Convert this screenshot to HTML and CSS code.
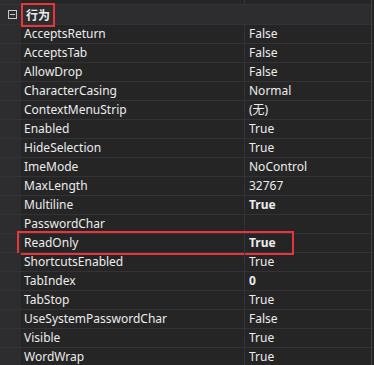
FILE: index.html
```html
<!DOCTYPE html>
<html lang="zh-CN">
<head>
    <meta charset="UTF-8">
    <title>属性</title>
    <link rel="stylesheet" href="styles.css">
</head>
<body>
    <div class="grid">
        <div class="row stub">
            <div class="gutter"></div>
            <div class="name"></div>
            <div class="value"></div>
        </div>

        <div class="row category">
            <div class="gutter"><span class="toggle"></span></div>
            <div class="cat-title"><span class="mark">行为</span></div>
        </div>

        <div class="row"><div class="gutter"></div><div class="name">AcceptsReturn</div><div class="value">False</div></div>
        <div class="row"><div class="gutter"></div><div class="name">AcceptsTab</div><div class="value">False</div></div>
        <div class="row"><div class="gutter"></div><div class="name">AllowDrop</div><div class="value">False</div></div>
        <div class="row"><div class="gutter"></div><div class="name">CharacterCasing</div><div class="value">Normal</div></div>
        <div class="row"><div class="gutter"></div><div class="name">ContextMenuStrip</div><div class="value">(无)</div></div>
        <div class="row"><div class="gutter"></div><div class="name">Enabled</div><div class="value">True</div></div>
        <div class="row"><div class="gutter"></div><div class="name">HideSelection</div><div class="value">True</div></div>
        <div class="row"><div class="gutter"></div><div class="name">ImeMode</div><div class="value">NoControl</div></div>
        <div class="row"><div class="gutter"></div><div class="name">MaxLength</div><div class="value">32767</div></div>
        <div class="row"><div class="gutter"></div><div class="name">Multiline</div><div class="value bold">True</div></div>
        <div class="row"><div class="gutter"></div><div class="name">PasswordChar</div><div class="value"></div></div>
        <div class="row highlight"><div class="gutter"></div><div class="name">ReadOnly</div><div class="value bold">True</div></div>
        <div class="row"><div class="gutter"></div><div class="name">ShortcutsEnabled</div><div class="value">True</div></div>
        <div class="row"><div class="gutter"></div><div class="name">TabIndex</div><div class="value bold">0</div></div>
        <div class="row"><div class="gutter"></div><div class="name">TabStop</div><div class="value">True</div></div>
        <div class="row"><div class="gutter"></div><div class="name">UseSystemPasswordChar</div><div class="value">False</div></div>
        <div class="row"><div class="gutter"></div><div class="name">Visible</div><div class="value">True</div></div>
        <div class="row"><div class="gutter"></div><div class="name">WordWrap</div><div class="value">True</div></div>
    </div>
</body>
</html>
```

FILE: styles.css
```css
body {
    margin: 0;
    background: #252526;
    font-family: "Noto Sans", "Noto Sans CJK SC", sans-serif;
    font-size: 12px;
    color: #ececec;
}

.grid {
    width: 371px;
    height: 365px;
    overflow: hidden;
    border-right: 1px solid #3f3f46;
}

.row {
    position: relative;
    display: flex;
    height: 18px;
    border-bottom: 1px solid #333337;
    line-height: 18px;
}

.row.stub {
    height: 4px;
}

.gutter {
    width: 21px;
    flex: none;
    background: #2d2d30;
    display: flex;
    align-items: center;
    justify-content: center;
}

.name {
    width: 220px;
    flex: none;
    padding-left: 3px;
    border-right: 1px solid #333337;
    white-space: nowrap;
}

.value {
    flex: 1;
    padding-left: 4px;
}

.value.bold {
    font-weight: bold;
}

.row.category {
    height: 19px;
    line-height: 19px;
    background: #2d2d30;
}

.toggle {
    position: relative;
    width: 7px;
    height: 7px;
    border: 1px solid #c8c8c8;
    margin-left: 4px;
}

.toggle::after {
    content: "";
    position: absolute;
    left: 1px;
    top: 3px;
    width: 5px;
    height: 1px;
    background: #c8c8c8;
}

.cat-title {
    display: flex;
    align-items: flex-start;
    font-weight: bold;
}

.mark {
    height: 20px;
    padding: 0 3px;
    margin-top: -2px;
    border: 2px solid #e8353a;
    line-height: 21px;
}

.row.highlight::after {
    content: "";
    position: absolute;
    left: 17px;
    top: -3px;
    width: 273px;
    height: 20px;
    border: 2px solid #e8353a;
}
```
